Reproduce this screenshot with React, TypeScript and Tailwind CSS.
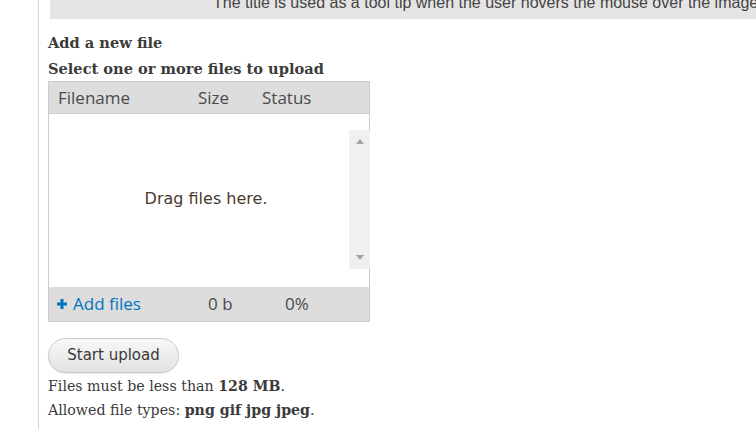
import React from "react";

const serif = "font-['DejaVu_Serif',Georgia,serif]";

export default function App() {
  return (
    <div className="h-[429px] w-[756px] overflow-hidden bg-white flex">
      <div className="w-[38px] shrink-0" />
      {/* ───────── content column */}
      <div className="flex-1 border-l border-[#d4d4d4] pl-[9px] text-[#3b3b3b]">
        {/* description box, cut at the top */}
        <div className="ml-[2px] h-[19px] bg-[#e4e4e4] overflow-hidden whitespace-nowrap">
          <div className="pl-[163px] -mt-[7px] text-[16px] leading-[19px] text-[#444] font-['Liberation_Sans',Arial,sans-serif]">
            The title is used as a tool tip when the user hovers the mouse over the image.
          </div>
        </div>

        <h3 className={`${serif} mt-[14px] text-[14.6px] font-bold leading-[20px]`}>Add a new file</h3>
        <h4 className={`${serif} mt-[6px] text-[14.6px] font-bold leading-[20px]`}>Select one or more files to upload</h4>

        {/* ───────── uploader */}
        <div className="mt-[2px] w-[322px] border border-[#cccccc] font-['Open_Sans',sans-serif] text-[17px]">
          <div className="flex h-[32px] items-center bg-[#dddddd] border-b border-[#cccccc] pt-[1px] text-[#4a4a4a]">
            <div className="w-[140px] pl-[9px]">Filename</div>
            <div className="w-[64px] pl-[9px]">Size</div>
            <div className="pl-[9px]">Status</div>
          </div>
          <div className="relative h-[173px] bg-white">
            <div className="flex h-full items-center justify-center pr-[6px] pb-[3px] font-['DejaVu_Sans',Verdana,sans-serif] text-[16px] text-[#4a3a30]">
              Drag files here.
            </div>
            <div className="absolute right-[-1px] top-[16px] flex h-[139px] w-[21px] flex-col items-center justify-between bg-[#f0f0f0] py-[9px]">
              <svg width="8" height="5" viewBox="0 0 8 5"><path d="M4 0L8 5H0z" fill="#a3a3a3" /></svg>
              <svg width="8" height="5" viewBox="0 0 8 5"><path d="M0 0h8L4 5z" fill="#a3a3a3" /></svg>
            </div>
          </div>
          <div className="flex h-[34px] items-center bg-[#dddddd]">
            <div className="flex w-[150px] items-center pl-[8px] text-[#0074bd]">
              <svg width="10" height="10" viewBox="0 0 10 10" className="mr-[6px]">
                <path d="M3.5 0h3v3.5H10v3H6.5V10h-3V6.5H0v-3h3.5z" fill="#0074bd" />
              </svg>
              Add files
            </div>
            <div className="w-[78px] pl-[9px] text-[#4a4a4a]">0 b</div>
            <div className="pl-[8px] text-[#4a4a4a]">0%</div>
          </div>
        </div>

        <button className="mt-[16px] h-[35px] w-[131px] rounded-[18px] border border-[#c8c8c8] bg-gradient-to-b from-[#f8f8f8] to-[#e2e2e2] font-['DejaVu_Sans',Verdana,sans-serif] text-[15px] text-[#3a3a3a] shadow-[0_1px_1px_rgba(0,0,0,0.08)]">
          Start upload
        </button>

        <div className={`${serif} mt-[1px] text-[14.2px] leading-[24px]`}>
          <p>
            Files must be less than <strong>128 MB</strong>.
          </p>
          <p>
            Allowed file types: <strong>png gif jpg jpeg</strong>.
          </p>
        </div>
      </div>
    </div>
  );
}
